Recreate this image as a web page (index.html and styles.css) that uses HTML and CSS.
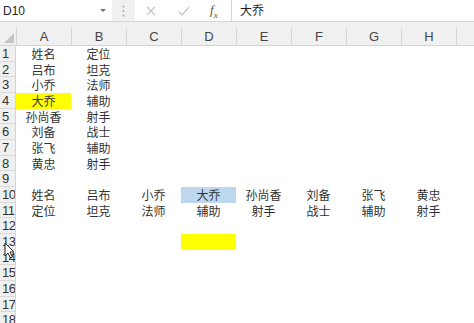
FILE: index.html
```html
<!DOCTYPE html>
<html lang="zh">
<head>
  <meta charset="UTF-8">
  <title>Sheet1</title>
  <link rel="stylesheet" href="styles.css">
</head>
<body>
  <div class="formula-bar">
    <div class="name-box">
      <span>D10</span>
      <span class="arrow"></span>
    </div>
    <div class="grip">
      <svg width="3" height="12" viewBox="0 0 3 12"><circle cx="1.5" cy="1.5" r="1" fill="#a8a8a8"/><circle cx="1.5" cy="6" r="1" fill="#a8a8a8"/><circle cx="1.5" cy="10.5" r="1" fill="#a8a8a8"/></svg>
    </div>
    <div class="buttons">
      <svg width="12" height="12" viewBox="0 0 12 12"><path d="M2 2L10 10M10 2L2 10" stroke="#c4c4c4" stroke-width="1.2" fill="none"/></svg>
      <svg width="13" height="12" viewBox="0 0 13 12"><path d="M1.5 6.5L5 10L12 2" stroke="#c4c4c4" stroke-width="1.2" fill="none"/></svg>
      <span class="fx">f<sub>x</sub></span>
    </div>
    <div class="formula">大乔</div>
  </div>

  <div class="sheet">
    <div class="col-head">
      <div class="corner"><span class="tri"></span></div>
      <div class="ch">A</div>
      <div class="ch">B</div>
      <div class="ch">C</div>
      <div class="ch">D</div>
      <div class="ch">E</div>
      <div class="ch">F</div>
      <div class="ch">G</div>
      <div class="ch">H</div>
      <div class="ch last"></div>
    </div>

    <div class="row"><div class="rh">1</div><div class="c">姓名</div><div class="c">定位</div></div>
    <div class="row"><div class="rh">2</div><div class="c">吕布</div><div class="c">坦克</div></div>
    <div class="row"><div class="rh">3</div><div class="c">小乔</div><div class="c">法师</div></div>
    <div class="row"><div class="rh">4</div><div class="c yellow">大乔</div><div class="c">辅助</div></div>
    <div class="row"><div class="rh">5</div><div class="c">孙尚香</div><div class="c">射手</div></div>
    <div class="row"><div class="rh">6</div><div class="c">刘备</div><div class="c">战士</div></div>
    <div class="row"><div class="rh">7</div><div class="c">张飞</div><div class="c">辅助</div></div>
    <div class="row"><div class="rh">8</div><div class="c">黄忠</div><div class="c">射手</div></div>
    <div class="row"><div class="rh">9</div></div>
    <div class="row">
      <div class="rh">10</div>
      <div class="c">姓名</div><div class="c">吕布</div><div class="c">小乔</div><div class="c selected">大乔</div>
      <div class="c">孙尚香</div><div class="c">刘备</div><div class="c">张飞</div><div class="c">黄忠</div>
    </div>
    <div class="row">
      <div class="rh">11</div>
      <div class="c">定位</div><div class="c">坦克</div><div class="c">法师</div><div class="c">辅助</div>
      <div class="c">射手</div><div class="c">战士</div><div class="c">辅助</div><div class="c">射手</div>
    </div>
    <div class="row"><div class="rh">12</div></div>
    <div class="row"><div class="rh">13</div><div class="c"></div><div class="c"></div><div class="c"></div><div class="c yellow"></div></div>
    <div class="row"><div class="rh">14</div></div>
    <div class="row"><div class="rh">15</div></div>
    <div class="row"><div class="rh">16</div></div>
    <div class="row"><div class="rh">17</div></div>
    <div class="row"><div class="rh">18</div></div>

    <svg class="cursor" width="11" height="17" viewBox="0 0 11 17">
      <path d="M1 1L1 14L4 11L6.5 16L8.5 15L6 10L10 10Z" fill="#fff" stroke="#222" stroke-width="1"/>
    </svg>
  </div>
</body>
</html>
```

FILE: styles.css
```css
body {
  margin: 0;
  width: 474px;
  height: 323px;
  overflow: hidden;
  background: #fff;
  font-family: "Liberation Sans", Arial, sans-serif;
}

/* formula bar */
.formula-bar {
  display: flex;
  height: 21px;
  border-bottom: 1px solid #d6d6d6;
  background: #fff;
}

.name-box {
  width: 112px;
  display: flex;
  align-items: center;
  justify-content: space-between;
  padding: 0 6px 0 3px;
  box-sizing: border-box;
  font-size: 12px;
  color: #222;
}

.arrow {
  width: 0;
  height: 0;
  border-left: 3px solid transparent;
  border-right: 3px solid transparent;
  border-top: 3px solid #777;
}

.grip {
  width: 23px;
  background: #f1f1f1;
  display: flex;
  align-items: center;
  justify-content: center;
}

.buttons {
  width: 96px;
  display: flex;
  align-items: center;
  gap: 20px;
  padding-left: 10px;
  box-sizing: border-box;
}

.fx {
  font-family: "Liberation Serif", serif;
  font-style: italic;
  font-size: 13px;
  color: #555;
}

.fx sub {
  font-size: 9px;
}

.formula {
  flex: 1;
  border-left: 1px solid #d6d6d6;
  padding-left: 8px;
  font-family: "Noto Sans CJK SC", sans-serif;
  font-size: 12px;
  line-height: 20px;
  color: #222;
}

/* sheet */
.sheet {
  position: relative;
}

.col-head {
  display: flex;
  height: 24px;
  padding-top: 6px;
  box-sizing: border-box;
  background: #f0f0f0;
  border-bottom: 1px solid #d4d4d4;
}

.corner {
  width: 16px;
  border-right: 1px solid #d4d4d4;
  position: relative;
}

.tri {
  position: absolute;
  right: 2px;
  bottom: 2px;
  width: 0;
  height: 0;
  border-left: 10px solid transparent;
  border-bottom: 10px solid #c6c6c6;
}

.ch {
  width: 54px;
  border-right: 1px solid #d4d4d4;
  text-align: center;
  font-size: 13px;
  line-height: 17px;
  color: #444;
}

.ch.last {
  flex: 1;
  border-right: none;
}

.row {
  display: flex;
  height: 15.67px;
}

.rh {
  width: 16px;
  flex: none;
  box-sizing: border-box;
  padding-left: 2px;
  background: #f0f0f0;
  border-right: 1px solid #d4d4d4;
  border-bottom: 1px solid #dadada;
  font-size: 13px;
  line-height: 15px;
  color: #333;
  overflow: hidden;
  letter-spacing: -0.5px;
}

.c {
  width: 55px;
  flex: none;
  text-align: center;
  font-family: "Noto Sans CJK SC", sans-serif;
  font-size: 12px;
  line-height: 15.67px;
  color: #333;
}

.yellow {
  background: #ffff00;
}

.selected {
  background: #bdd7ee;
}

.cursor {
  position: absolute;
  left: 4px;
  top: 220px;
}
```
